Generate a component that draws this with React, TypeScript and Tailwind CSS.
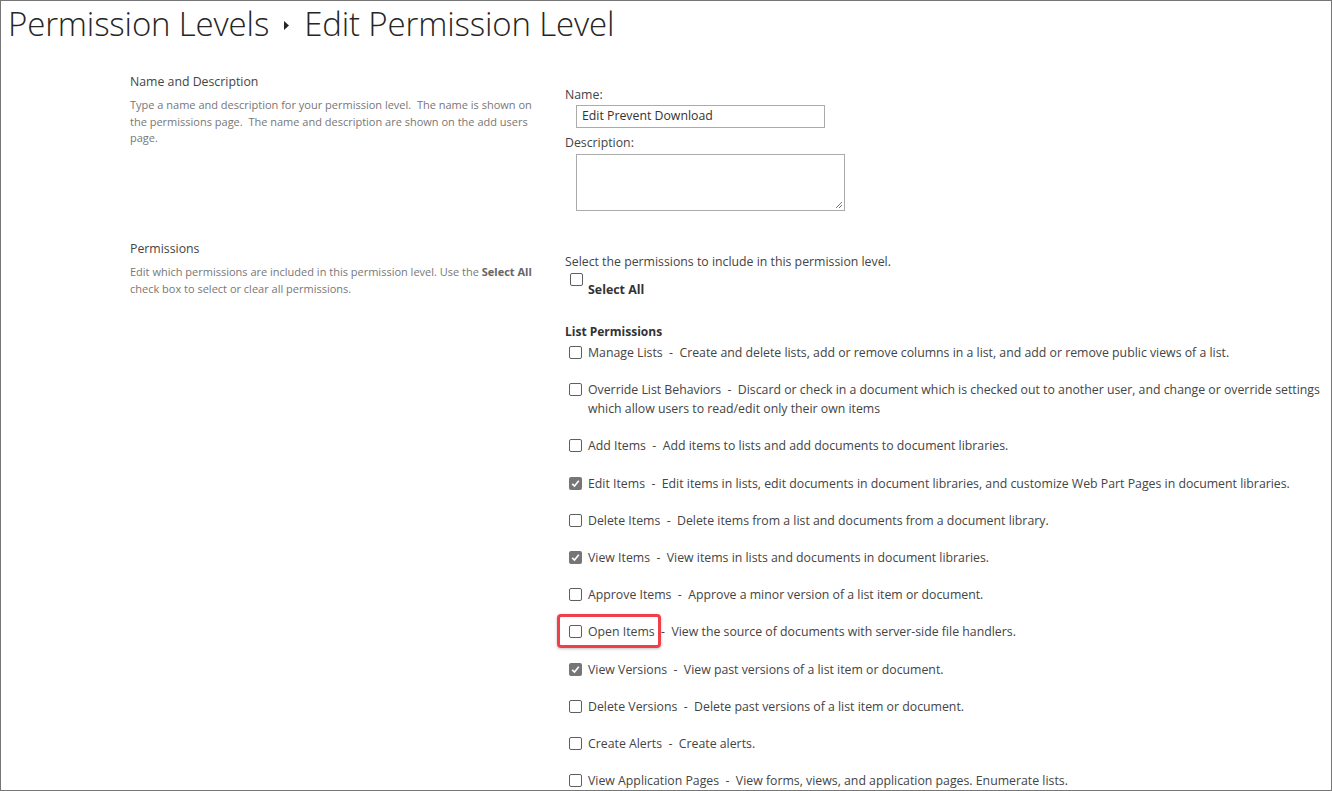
import React from "react";

const font = { fontFamily: '"Open Sans", "Noto Sans", Arial, sans-serif' };

type Perm = { name: string; desc: React.ReactNode; checked?: boolean; mark?: boolean };

const perms: Perm[] = [
  { name: "Manage Lists", desc: "Create and delete lists, add or remove columns in a list, and add or remove public views of a list." },
  {
    name: "Override List Behaviors",
    desc: (
      <>
        Discard or check in a document which is checked out to another user, and change or override settings
        <br />
        which allow users to read/edit only their own items
      </>
    ),
  },
  { name: "Add Items", desc: "Add items to lists and add documents to document libraries." },
  { name: "Edit Items", desc: "Edit items in lists, edit documents in document libraries, and customize Web Part Pages in document libraries.", checked: true },
  { name: "Delete Items", desc: "Delete items from a list and documents from a document library." },
  { name: "View Items", desc: "View items in lists and documents in document libraries.", checked: true },
  { name: "Approve Items", desc: "Approve a minor version of a list item or document." },
  { name: "Open Items", desc: "View the source of documents with server-side file handlers.", mark: true },
  { name: "View Versions", desc: "View past versions of a list item or document.", checked: true },
  { name: "Delete Versions", desc: "Delete past versions of a list item or document." },
  { name: "Create Alerts", desc: "Create alerts." },
  { name: "View Application Pages", desc: "View forms, views, and application pages. Enumerate lists." },
];

const Check = ({ checked }: { checked?: boolean }) =>
  checked ? (
    <span className="flex h-[13px] w-[13px] shrink-0 items-center justify-center rounded-[2px] bg-[#767676]">
      <svg width="9" height="9" viewBox="0 0 9 9">
        <path d="M1.2 4.8 L3.5 7 L7.8 1.8" fill="none" stroke="#fff" strokeWidth="1.6" />
      </svg>
    </span>
  ) : (
    <span className="block h-[13px] w-[13px] shrink-0 rounded-[2px] border border-[#5f5f5f] bg-white" />
  );

export default function App() {
  return (
    <div style={font} className="relative h-[791px] w-[1332px] overflow-hidden border border-[#767676] bg-white text-[#444]">
      {/* title */}
      <div className="flex h-[48px] items-center pl-[7px] pb-[2px] text-[33px] font-light leading-[40px] tracking-[-0.15px] text-[#262626]">
        <span>Permission Levels</span>
        <svg className="ml-[15px] mr-[15px] mt-[3px]" width="5" height="9" viewBox="0 0 5 9">
          <path d="M0 0 L5 4.5 L0 9 Z" fill="#262626" />
        </svg>
        <span>Edit Permission Level</span>
      </div>

      {/* name and description */}
      <div className="mt-[24px] grid grid-cols-[435px_1fr] pl-[129px]">
        <div>
          <div className="text-[12.3px] leading-[18px]">Name and Description</div>
          <div className="mt-[6px] whitespace-nowrap text-[11px] leading-[16.5px] text-[#777]">
            Type a name and description for your permission level.&nbsp; The name is shown on
            <br />
            the permissions page.&nbsp; The name and description are shown on the add users
            <br />
            page.
          </div>
        </div>
        <div className="pt-[13px] text-[12.3px]">
          <div className="leading-[18px]">Name:</div>
          <div className="ml-[11px] mt-[1px] flex h-[23px] w-[249px] items-center border border-[#ababab] px-[5px] text-[#333]">
            Edit Prevent Download
          </div>
          <div className="mt-[6px] leading-[18px]">Description:</div>
          <div className="relative ml-[11px] mt-[2px] h-[57px] w-[269px] border border-[#ababab]">
            <svg className="absolute bottom-[1px] right-[1px]" width="8" height="8" viewBox="0 0 8 8">
              <path d="M7 1 L1 7 M7 4 L4 7" stroke="#777" strokeWidth="1" />
            </svg>
          </div>
        </div>
      </div>

      {/* permissions */}
      <div className="mt-[29px] grid grid-cols-[435px_1fr] pl-[129px]">
        <div>
          <div className="text-[12.3px] leading-[18px]">Permissions</div>
          <div className="mt-[6px] whitespace-nowrap text-[11px] leading-[16.5px] text-[#777]">
            Edit which permissions are included in this permission level. Use the <b className="text-[#666]">Select All</b>
            <br />
            check box to select or clear all permissions.
          </div>
        </div>
        <div className="pt-[13px] text-[12.3px]">
          <div className="leading-[18px]">Select the permissions to include in this permission level.</div>
          <div className="flex items-start">
            <span className="ml-[5px] mt-[2px]">
              <Check />
            </span>
            <span className="ml-[5px] mt-[10px] text-[12.4px] font-bold leading-[18px] text-[#333]">Select All</span>
          </div>
          <div className="mt-[24px] text-[12px] font-bold leading-[18px] text-[#333]">List Permissions</div>
          <div className="mt-[2px]">
            {perms.map((p) => (
              <div key={p.name} className="relative mb-[18.2px] flex items-start">
                {p.mark && (
                  <div className="absolute left-[-8px] top-[-8px] h-[34px] w-[104px] rounded-[4px] border-[3px] border-[#ee3f4a] shadow-[0_1px_3px_rgba(0,0,0,0.25)]" />
                )}
                <span className="ml-[4px] mt-[3px]">
                  <Check checked={p.checked} />
                </span>
                <div className="ml-[6px] whitespace-nowrap leading-[19px]">
                  {p.name}&nbsp; -&nbsp; {p.desc}
                </div>
              </div>
            ))}
          </div>
        </div>
      </div>
    </div>
  );
}
